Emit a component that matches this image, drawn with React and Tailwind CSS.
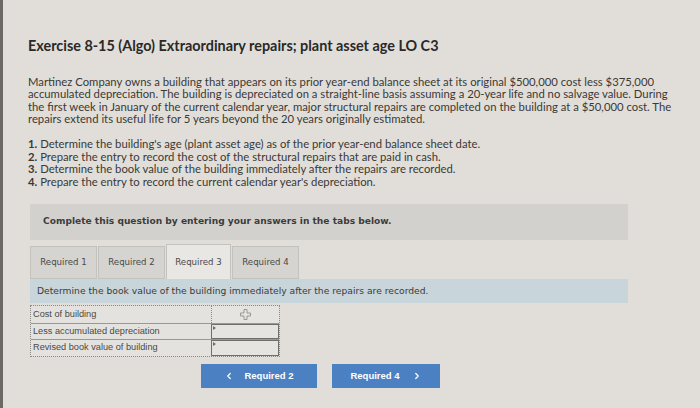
import { ChevronLeft, ChevronRight } from 'lucide-react';

const tabs = ['Required 1', 'Required 2', 'Required 3', 'Required 4'];

const rows = [
  { label: 'Cost of building', first: true },
  { label: 'Less accumulated depreciation' },
  { label: 'Revised book value of building' },
];

const App = () => {
  return (
    <div className="w-[700px] h-[408px] overflow-hidden bg-[#e1ded9] border-l-[3px] border-[#6b6966] font-['Lato',sans-serif] text-[#33322f]">
      <div className="pl-[25px] pr-[26px] pt-[36px]">
        <h1 className="text-[14.4px] font-bold leading-5 text-[#2a2927]">
          Exercise 8-15 (Algo) Extraordinary repairs; plant asset age LO C3
        </h1>

        <p className="mt-[20px] text-[11.3px] leading-[12.3px] text-[#3a3936]">
          Martinez Company owns a building that appears on its prior year-end balance sheet at its original $500,000 cost less $375,000
          accumulated depreciation. The building is depreciated on a straight-line basis assuming a 20-year life and no salvage value. During
          the first week in January of the current calendar year, major structural repairs are completed on the building at a $50,000 cost. The
          repairs extend its useful life for 5 years beyond the 20 years originally estimated.
        </p>

        <ol className="mt-[13px] text-[11.3px] leading-[12.5px] text-[#3a3936]">
          <li><span className="font-bold">1.</span> Determine the building's age (plant asset age) as of the prior year-end balance sheet date.</li>
          <li><span className="font-bold">2.</span> Prepare the entry to record the cost of the structural repairs that are paid in cash.</li>
          <li><span className="font-bold">3.</span> Determine the book value of the building immediately after the repairs are recorded.</li>
          <li><span className="font-bold">4.</span> Prepare the entry to record the current calendar year's depreciation.</li>
        </ol>

        <div className="mt-[16px] ml-[2px] w-[598px] h-[36px] bg-[#d3d1ce] flex items-center px-[13px]">
          <span className="font-['DejaVu_Sans',sans-serif] font-bold text-[9.1px] text-[#3d3c3a]">
            Complete this question by entering your answers in the tabs below.
          </span>
        </div>

        <div className="ml-[2px] mt-[4px] flex gap-[1px] items-end">
          {tabs.map((t, i) => (
            <div
              key={t}
              className={
                i === 2
                  ? 'w-[65px] h-[35px] bg-[#e9e7e3] border border-b-0 border-[#c4c2be] flex items-center justify-center font-["DejaVu_Sans",sans-serif] text-[8.6px] text-[#4a4946]'
                  : 'w-[67px] h-[33px] bg-[#d6d4d0] border border-[#c4c2be] flex items-center justify-center font-["DejaVu_Sans",sans-serif] text-[8.6px] text-[#4a4946]'
              }
            >
              {t}
            </div>
          ))}
        </div>

        <div className="ml-[2px] w-[598px] h-[24px] bg-[#c8d5db] flex items-center px-[7px]">
          <span className="font-['DejaVu_Sans',sans-serif] text-[9.2px] text-[#3c3b39]">
            Determine the book value of the building immediately after the repairs are recorded.
          </span>
        </div>

        <div className="ml-[2px] mt-[2px] w-[250px] border border-dotted border-[#8d8b88] font-['Liberation_Sans',sans-serif] text-[9.2px] text-[#4a4946]">
          {rows.map((r, i) => (
            <div key={r.label} className={`flex h-[16.5px] ${i > 0 ? 'border-t border-[#9a9894]' : ''}`}>
              <div className="flex-1 flex items-center pl-[2px] bg-[#e4e2de]">{r.label}</div>
              {r.first ? (
                <div className="w-[68px] flex items-center justify-center border-l border-dotted border-[#8d8b88] bg-[#e6e4e0]">
                  <svg width="11" height="11" viewBox="0 0 11 11" fill="none" stroke="#9a9894" strokeWidth="1">
                    <path d="M4 0.5h3v3.5h3.5v3h-3.5v3.5h-3v-3.5h-3.5v-3h3.5z" />
                  </svg>
                </div>
              ) : (
                <div className="w-[68px] border border-[#6f6e6b] bg-[#e6e4e0] relative">
                  <span className="absolute left-[1px] top-[1px] w-0 h-0 border-y-[2px] border-y-transparent border-l-[3px] border-l-[#6f6e6b]" />
                </div>
              )}
            </div>
          ))}
        </div>

        <div className="mt-[7px] ml-[173px] flex gap-[15px] font-['Liberation_Sans',sans-serif] font-bold text-[9.5px] text-white">
          <div className="w-[116px] h-[24px] bg-[#4b80c3] flex items-center justify-center gap-[10px]">
            <ChevronLeft size={10} strokeWidth={3} />
            <span>Required 2</span>
          </div>
          <div className="w-[108px] h-[24px] bg-[#4b80c3] flex items-center justify-center gap-[12px]">
            <span>Required 4</span>
            <ChevronRight size={10} strokeWidth={3} />
          </div>
        </div>
      </div>
    </div>
  );
};

export default App;
